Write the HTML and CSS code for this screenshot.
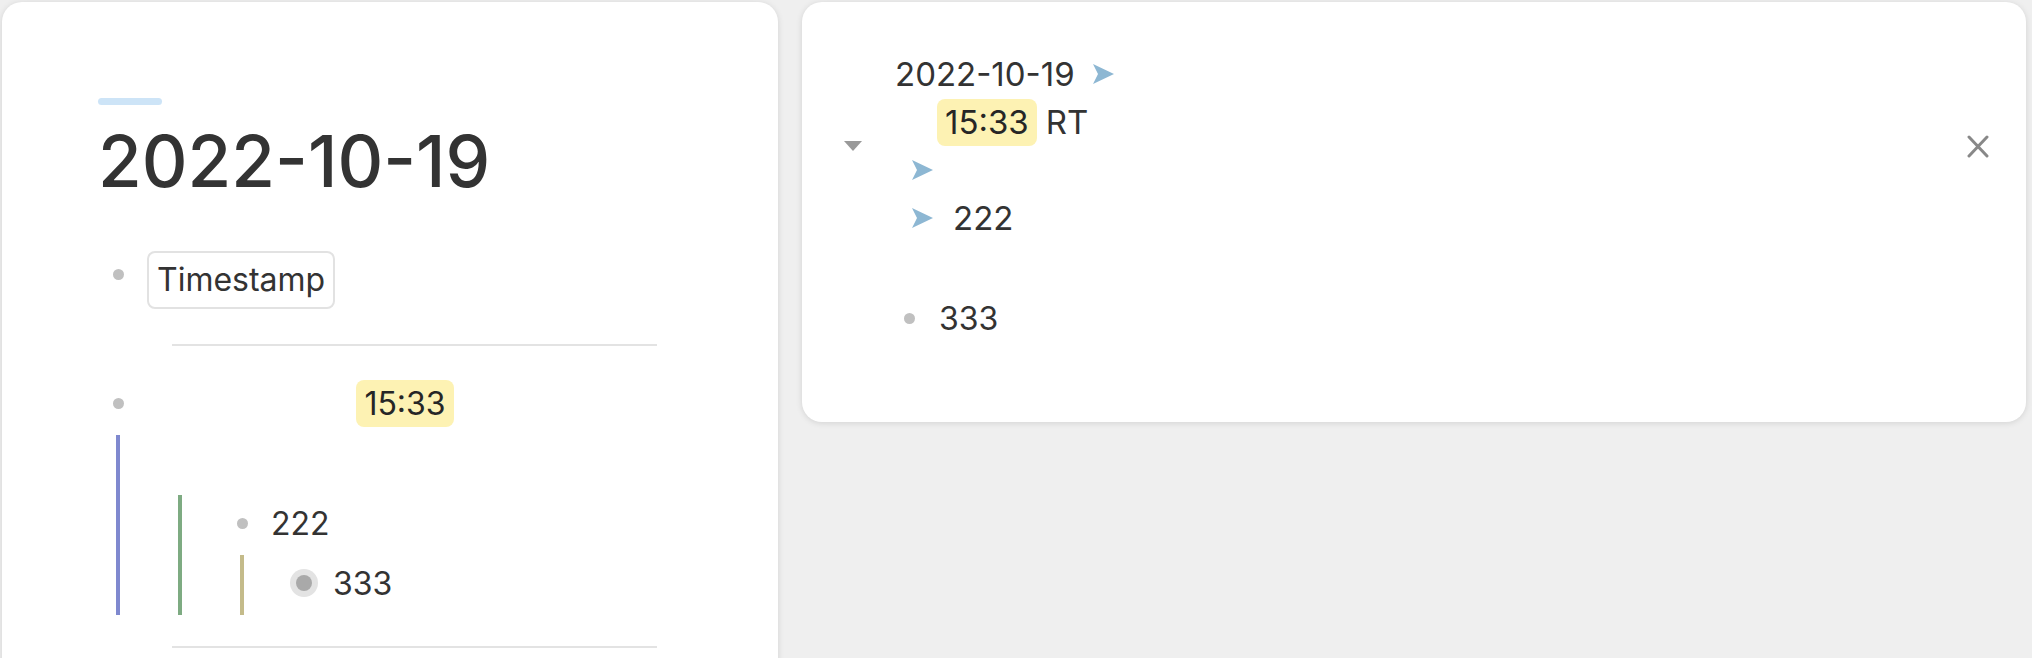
FILE: index.html
```html
<!DOCTYPE html>
<html lang="en">
<head>
    <meta charset="UTF-8">
    <meta name="viewport" content="width=device-width, initial-scale=1.0">
    <title>2022-10-19</title>
    <link rel="stylesheet" href="styles.css">
</head>
<body>

    <div class="page">

        <div class="card main">
            <div class="title-bar"></div>
            <h1 class="title">2022-10-19</h1>

            <div class="row row-first">
                <span class="bullet-wrap"><span class="bullet"></span></span>
                <span class="tag-box">Timestamp</span>
            </div>

            <div class="divider"></div>

            <div class="block">
                <div class="row row-center">
                    <span class="bullet-wrap"><span class="bullet"></span></span>
                    <div class="centered"><span class="hl">15:33</span></div>
                </div>
                <div class="children line-blue">
                    <div class="row"><span class="bullet-wrap"></span></div>
                    <div class="children line-green">
                        <div class="row">
                            <span class="bullet-wrap"><span class="bullet"></span></span>
                            <span class="text">222</span>
                        </div>
                        <div class="children line-olive">
                            <div class="row">
                                <span class="bullet-wrap"><span class="bullet ring"></span></span>
                                <span class="text">333</span>
                            </div>
                        </div>
                    </div>
                </div>
            </div>

            <div class="divider divider-bottom"></div>
        </div>

        <div class="card side">
            <div class="ref-head">
                <span class="toggle"></span>
                <div class="crumbs">
                    <div class="crumb-line">
                        <span>2022-10-19</span>
                        <svg class="arrow first" viewBox="0 0 21 20"><polygon points="0,0 21,10 0,20 5,10"/></svg>
                    </div>
                    <div class="crumb-line indent-hl">
                        <span class="hl">15:33</span>
                        <span class="rt">RT</span>
                    </div>
                    <div class="crumb-line indent-arrow">
                        <svg class="arrow" viewBox="0 0 21 20"><polygon points="0,0 21,10 0,20 5,10"/></svg>
                    </div>
                    <div class="crumb-line indent-arrow">
                        <svg class="arrow" viewBox="0 0 21 20"><polygon points="0,0 21,10 0,20 5,10"/></svg>
                        <span class="crumb-text">222</span>
                    </div>
                </div>
                <svg class="close" viewBox="0 0 22 23">
                    <line x1="2" y1="2" x2="20" y2="21"/>
                    <line x1="20" y1="2" x2="2" y2="21"/>
                </svg>
            </div>

            <div class="ref-row">
                <span class="bullet-wrap"><span class="bullet"></span></span>
                <span class="text">333</span>
            </div>
        </div>

    </div>

</body>
</html>
```

FILE: styles.css
```css
body {
    margin: 0;
    background-color: #efefef;
    font-family: Inter, "Noto Sans", sans-serif;
    font-size: 32px;
    color: #333;
    overflow: hidden;
}
.page {
    display: flex;
    align-items: flex-start;
    gap: 24px;
    padding: 2px 6px 0 2px;
}
.card {
    background-color: #fff;
    border-radius: 20px;
    box-shadow: 0 1px 6px rgba(0,0,0,0.12);
    box-sizing: border-box;
}

/* left page */
.main {
    width: 776px;
    height: 720px;
    padding: 96px 0 0 96px;
}
.title-bar {
    width: 64px;
    height: 7px;
    border-radius: 4px;
    background-color: #cde4f7;
    margin-bottom: 16px;
}
.title {
    margin: 0;
    font-size: 71px;
    line-height: 80px;
    font-weight: 500;
}
.row {
    display: flex;
    align-items: center;
    height: 60px;
    padding-bottom: 4px;
    box-sizing: border-box;
}
.bullet-wrap {
    width: 40px;
    flex: none;
    display: flex;
    justify-content: center;
    align-items: center;
}
.bullet {
    width: 11px;
    height: 11px;
    border-radius: 50%;
    background-color: #c0c0c0;
}
.bullet.ring {
    width: 16px;
    height: 16px;
    background-color: #a9a9a9;
    box-shadow: 0 0 0 6px #e3e3e3;
}
.row-first {
    margin-top: 50px;
    align-items: flex-start;
    height: auto;
    padding: 0;
}
.row-first .bullet-wrap {
    height: 46px;
}
.tag-box {
    margin-left: 9px;
    height: 58px;
    line-height: 54px;
    padding: 0 8px;
    border: 2px solid #e2e2e2;
    border-radius: 8px;
    box-sizing: border-box;
}
.divider {
    margin: 35px 0 0 74px;
    width: 485px;
    height: 2px;
    background-color: #e3e3e3;
}
.divider-bottom {
    margin-top: 31px;
}
.row-center {
    margin-top: 27px;
    padding-bottom: 0;
}
.centered {
    margin-left: 9px;
    width: 516px;
    text-align: center;
}
.hl {
    display: inline-block;
    background-color: #fdf2b3;
    color: #262626;
    line-height: 47px;
    padding: 0 8px;
    border-radius: 8px;
}
.text {
    margin-left: 9px;
}
.children {
    margin-left: 18px;
    padding-left: 40px;
    border-left: 4px solid;
}
.line-blue {
    margin-top: 2px;
    border-color: #7f89cf;
}
.line-green {
    border-color: #7eab82;
}
.line-olive {
    border-color: #c4bb8a;
}

/* right reference panel */
.side {
    flex: 1;
    height: 420px;
}
.ref-head {
    display: flex;
    align-items: center;
    margin-top: 48px;
    padding-left: 42px;
}
.toggle {
    width: 0;
    height: 0;
    border-left: 9px solid transparent;
    border-right: 9px solid transparent;
    border-top: 10px solid #999;
    margin-right: 33px;
}
.crumbs {
    display: flex;
    flex-direction: column;
    font-size: 33px;
}
.crumb-line {
    display: flex;
    align-items: center;
    height: 48px;
}
.arrow {
    width: 21px;
    height: 20px;
    fill: #8db7d3;
}
.arrow.first {
    margin-left: 18px;
}
.indent-hl {
    margin-left: 42px;
}
.indent-arrow {
    margin-left: 17px;
}
.rt {
    margin-left: 9px;
}
.crumb-text {
    margin-left: 20px;
}
.close {
    margin-left: auto;
    margin-right: 37px;
    width: 22px;
    height: 23px;
    stroke: #888;
    stroke-width: 3;
    stroke-linecap: round;
}
.ref-row {
    display: flex;
    align-items: center;
    height: 48px;
    margin-top: 52px;
    padding-left: 87px;
}
.ref-row .text {
    margin-left: 10px;
}
```
